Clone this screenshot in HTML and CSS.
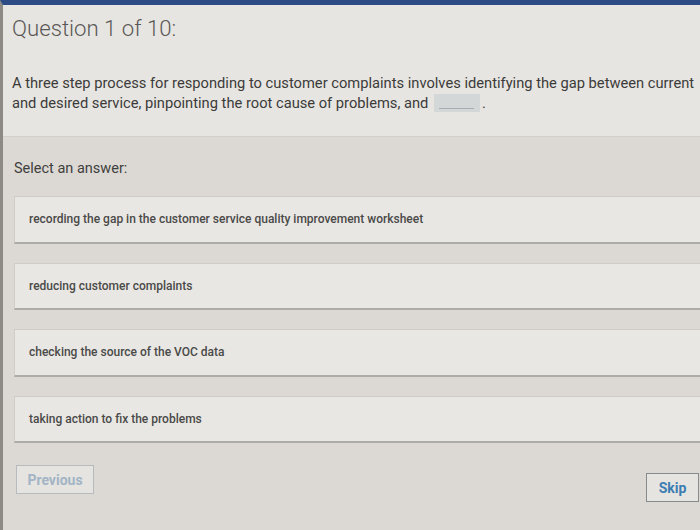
FILE: index.html
```html
<!DOCTYPE html>
<html>
<head>
<meta charset="utf-8">
<link rel="stylesheet" href="styles.css">
</head>
<body>
<div class="frame">
  <section class="question">
    <h1 class="title">Question 1 of 10:</h1>
    <p class="prompt">A three step process for responding to customer complaints involves identifying the gap between current and desired service, pinpointing the root cause of problems, and <span class="blank"><span class="blank-line"></span></span>.</p>
  </section>
  <section class="answers">
    <div class="label">Select an answer:</div>
    <div class="options">
      <div class="option">recording the gap in the customer service quality improvement worksheet</div>
      <div class="option">reducing customer complaints</div>
      <div class="option">checking the source of the VOC data</div>
      <div class="option">taking action to fix the problems</div>
    </div>
    <div class="nav">
      <button class="btn btn-prev">Previous</button>
      <button class="btn btn-skip">Skip</button>
    </div>
  </section>
</div>
</body>
</html>
```
FILE: styles.css
```css
html, body {
  margin: 0;
  padding: 0;
  background: #dcd9d4;
}
body {
  font-family: Roboto, "Liberation Sans", sans-serif;
  width: 700px;
  height: 530px;
  overflow: hidden;
}
.frame {
  height: 525px;
  border-top: 5px solid #2d4c86;
  border-left: 3px solid #8d8a85;
  width: 697px;
  overflow: hidden;
}
.question {
  background: #e7e5e1;
  height: 132px;
  padding: 0 4px 0 9px;
  border-bottom: 1px solid #d3d0cb;
  box-sizing: border-box;
}
.title {
  margin: 0;
  padding-top: 9px;
  font-weight: 300;
  font-size: 22.2px;
  line-height: 28px;
  color: #595856;
}
.prompt {
  margin: 31px 0 0;
  font-size: 14.7px;
  line-height: 20px;
  color: #3b3b3a;
}
.blank {
  display: inline-block;
  width: 46px;
  height: 18px;
  background: #d4d7d7;
  vertical-align: -4px;
  margin: 0 2px 0 2px;
  position: relative;
}
.blank-line {
  position: absolute;
  left: 5px;
  right: 6px;
  bottom: 3px;
  height: 1px;
  background: #a7aeb3;
}
.answers {
  padding: 22px 0 0 11px;
}
.label {
  font-size: 14.5px;
  line-height: 20px;
  color: #3f3f3e;
}
.options {
  margin-top: 17px;
  display: flex;
  flex-direction: column;
  gap: 19px;
}
.option {
  height: 47.5px;
  box-sizing: border-box;
  margin-right: -4px;
  background: #e9e7e3;
  border: 1px solid #cfccc7;
  border-bottom: 2px solid #aeaca8;
  padding: 0 0 0 14px;
  display: flex;
  align-items: center;
  font-size: 12px;
  font-weight: 500;
  color: #4a4a49;
}
.nav {
  margin-top: 22px;
  display: flex;
  justify-content: space-between;
  align-items: flex-start;
  padding: 0 1px 0 2px;
}
.btn {
  font-family: Roboto, "Liberation Sans", sans-serif;
  font-weight: 700;
  font-size: 14px;
  background: #e6e4e0;
  height: 29px;
  box-sizing: border-box;
  padding: 0;
}
.btn-prev {
  width: 78px;
  border: 1px solid #b8bbbd;
  color: #a2b4c5;
}
.btn-skip {
  width: 53px;
  margin-top: 8px;
  border: 1px solid #868b8e;
  color: #3d7db2;
}
```
